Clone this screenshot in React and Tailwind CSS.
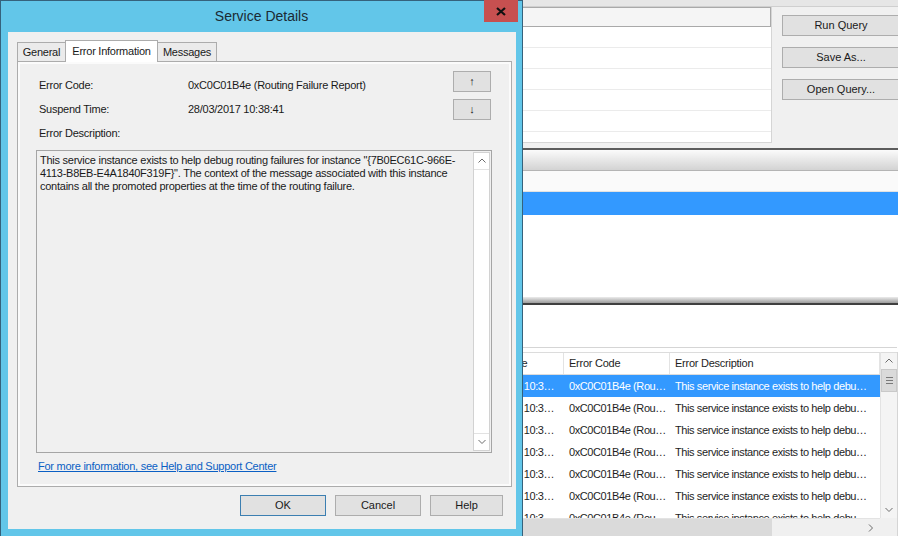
import React from "react";

const columns = [
  { key: "name", label: "Service Name", w: "w-[285px]" },
  { key: "status", label: "Status", w: "w-[170px]" },
  { key: "time", label: "Suspend Time", w: "w-[109px]" },
  { key: "code", label: "Error Code", w: "w-[106px]" },
  { key: "desc", label: "Error Description", w: "w-[210px]" },
];

const row = {
  name: "Microsoft.BizTalk.DefaultPipelines.XMLReceive",
  status: "Suspended (resumable)",
  time: "28/03/2017 10:38:41",
  code: "0xC0C01B4e (Routing Failure Report)",
  desc: "This service instance exists to help debug routing failures for instance",
};

const rows = Array.from({ length: 7 }, (_, i) => ({ ...row, id: i }));

function Chevron({ dir = "up" }) {
  const d = {
    up: "M0.5 4.5L4 1L7.5 4.5",
    down: "M0.5 1L4 4.5L7.5 1",
    right: "M1 0.5L4.5 4L1 7.5",
  }[dir];
  const box = dir === "right" ? "0 0 6 8" : "0 0 8 6";
  return (
    <svg width={dir === "right" ? 6 : 8} height={dir === "right" ? 8 : 6} viewBox={box}>
      <path d={d} fill="none" stroke="#6b6b6b" strokeWidth="1" />
    </svg>
  );
}

function WinButton({ children, className = "", primary = false }) {
  return (
    <button
      className={`flex h-[21px] shrink-0 items-center justify-center border bg-[#e1e1e1] text-[11px] tracking-normal text-[#1a1a1a] ${
        primary ? "border-[#3c7fb1]" : "border-[#adadad]"
      } ${className}`}
    >
      {children}
    </button>
  );
}

function AppWindow() {
  return (
    <div className="flex h-full flex-col">
      <div className="h-[7px] border-b border-[#cfcfcf] bg-[#e6e6e6]" />

      {/* query area */}
      <div className="flex h-[141px]">
        <div className="flex h-[136px] w-[772px] shrink-0 flex-col border-r border-b border-[#d5d5d5] bg-white">
          <div className="h-[20px] border border-[#a9a9a9] bg-[#f5f5f5]" />
          {[0, 1, 2, 3, 4].map((i) => (
            <div key={i} className="h-[21px] border-b border-[#ebebeb]" />
          ))}
        </div>
        <div className="flex shrink-0 flex-col gap-[11px] pl-[10px] pt-[8px]">
          <WinButton className="w-[118px]">Run Query</WinButton>
          <WinButton className="w-[118px]">Save As...</WinButton>
          <WinButton className="w-[118px]">Open Query...</WinButton>
        </div>
      </div>

      {/* results */}
      <div className="h-[23px] border-t-2 border-b border-t-[#5c5c5c] border-b-[#b4b4b4] bg-gradient-to-b from-[#fbfbfb] to-[#d3d3d3]" />
      <div className="h-[21px] border-b border-[#e2e2e2] bg-[#fafafa]" />
      <div className="h-[23px] bg-[#3399ff]" />
      <div className="h-[82px] bg-white" />
      <div className="h-[8px] border-b-2 border-[#3f3f3f] bg-gradient-to-b from-[#ececec] to-[#9c9c9c]" />
      <div className="h-[47px] bg-white pr-[1px]">
        <div className="h-[43px] border-b border-[#d5d5d5]" />
      </div>

      {/* message grid */}
      <div className="flex h-[184px] border-r border-[#d5d5d5] bg-white tracking-[-0.4px]">
        <div className="flex w-[880px] shrink-0 flex-col">
          <div className="flex h-[23px] border-t border-b border-[#dcdcdc] tracking-[-0.25px]">
            {columns.map((c) => (
              <div
                key={c.key}
                className={`${c.w} flex shrink-0 items-center border-r border-[#e3e3e3] pl-[5px] text-[#1e1e1e]`}
              >
                {c.label}
              </div>
            ))}
          </div>
          <div className="h-[143px] overflow-hidden">
            {rows.map((r) => {
              const sel = r.id === 0;
              return (
                <div
                  key={r.id}
                  className={`flex h-[22px] items-center ${sel ? "bg-[#3399ff] text-white" : "text-[#1e1e1e]"}`}
                >
                  <div className="w-[285px] shrink-0 truncate pl-[5px]">{r.name}</div>
                  <div className="w-[170px] shrink-0 truncate pl-[5px]">{r.status}</div>
                  <div className="w-[109px] shrink-0 truncate pl-[15px] pr-[5px]">{r.time}</div>
                  <div className="w-[106px] shrink-0 truncate pl-[5px] pr-[3px]">{r.code}</div>
                  <div className="w-[210px] shrink-0 truncate pl-[5px] pr-[11px]">{r.desc}</div>
                </div>
              );
            })}
          </div>
          <div className="flex h-[18px] border-t border-[#e3e3e3] bg-[#f0f0f0]">
            <div className="w-[772px] shrink-0 bg-[#dadada]" />
            <div className="flex-1" />
            <div className="flex w-[18px] items-center justify-center">
              <Chevron dir="right" />
            </div>
          </div>
        </div>
        <div className="flex w-[17px] shrink-0 flex-col">
          <div className="flex h-[166px] flex-col border-l border-[#e3e3e3] bg-[#f4f4f4]">
            <div className="flex h-[17px] items-center justify-center border-t border-[#dcdcdc]">
              <Chevron dir="up" />
            </div>
            <div className="flex h-[23px] flex-col items-center justify-center gap-[2px] border border-[#c9c9c9] bg-[#dadada]">
              <div className="h-px w-[7px] bg-[#7a7a7a]" />
              <div className="h-px w-[7px] bg-[#7a7a7a]" />
              <div className="h-px w-[7px] bg-[#7a7a7a]" />
            </div>
            <div className="flex-1" />
            <div className="flex h-[17px] items-center justify-center">
              <Chevron dir="down" />
            </div>
          </div>
          <div className="h-[18px] bg-[#f0f0f0]" />
        </div>
      </div>
    </div>
  );
}

function Tab({ children, active, className = "" }) {
  return (
    <div
      className={`flex items-center justify-center border border-b-0 border-[#acacac] ${
        active ? "relative z-10 -mb-px h-[22px] bg-white" : "h-[19px] bg-[#ebebeb]"
      } ${className}`}
    >
      {children}
    </div>
  );
}

function ServiceDetailsDialog() {
  return (
    <div className="absolute left-0 top-0 flex h-[545px] w-[523px] flex-col border border-[#35627c] bg-[#62c6e9]">
      <div className="relative flex h-[31px] items-center justify-center">
        <span className="text-[14px] tracking-normal text-[#1b2a33]">Service Details</span>
        <div className="absolute right-[4px] top-[-1px] flex h-[22px] w-[34px] items-center justify-center bg-[#c75050]">
          <svg width="10" height="9" viewBox="0 0 10 9">
            <path d="M1 1L9 8M9 1L1 8" stroke="#111" strokeWidth="2.2" />
          </svg>
        </div>
      </div>

      <div className="ml-[7px] mr-[6px] flex h-[497px] flex-col bg-[#f0f0f0]">
        {/* tabs */}
        <div className="ml-[9px] mt-[8px] flex h-[21px] items-end">
          <Tab className="w-[49px]">General</Tab>
          <Tab active className="-ml-px w-[93px]">Error Information</Tab>
          <Tab className="-ml-px w-[60px]">Messages</Tab>
        </div>

        <div className="ml-[9px] mr-[4px] flex h-[426px] flex-col border border-[#acacac] bg-[#f0f0f0] shadow-[inset_0_0_0_2px_#fbfbfb]">
          <div className="flex items-start justify-between pl-[21px] pr-[20px] pt-[9px]">
            <div className="mt-[2px] grid grid-cols-[149px_1fr] auto-rows-[24px] items-center">
              <span>Error Code:</span>
              <span>0xC0C01B4e (Routing Failure Report)</span>
              <span>Suspend Time:</span>
              <span>28/03/2017 10:38:41</span>
              <span>Error Description:</span>
              <span />
            </div>
            <div className="flex flex-col gap-[7px]">
              <WinButton className="w-[38px] text-[10px]">↑</WinButton>
              <WinButton className="w-[38px] text-[10px]">↓</WinButton>
            </div>
          </div>

          <div className="ml-[18px] mt-[5px] flex h-[303px] w-[456px] border border-[#a5a5a5] bg-[#f0f0f0] p-px">
            <div className="flex-1 whitespace-nowrap pl-[2px] pt-[2px] leading-[13px]">
              This service instance exists to help debug routing failures for instance "{"{"}7B0EC61C-966E-
              <br />
              4113-B8EB-E4A1840F319F{"}"}". The context of the message associated with this instance
              <br />
              contains all the promoted properties at the time of the routing failure.
            </div>
            <div className="flex w-[17px] flex-col border border-[#d2d2d2] bg-white">
              <div className="flex h-[17px] items-center justify-center border-b border-[#e2e2e2]">
                <Chevron dir="up" />
              </div>
              <div className="flex-1" />
              <div className="flex h-[17px] items-center justify-center border-t border-[#e2e2e2]">
                <Chevron dir="down" />
              </div>
            </div>
          </div>

          <div className="ml-[20px] mt-[7px] leading-[13px]">
            <span className="text-[#0a5fc4] underline">For more information, see Help and Support Center</span>
          </div>
        </div>

        <div className="mr-[13px] mt-[8px] flex justify-end gap-[9px]">
          <WinButton primary className="w-[86px]">OK</WinButton>
          <WinButton className="w-[86px]">Cancel</WinButton>
          <WinButton className="w-[73px]">Help</WinButton>
        </div>
      </div>
    </div>
  );
}

export default function App() {
  return (
    <div className="relative h-[536px] w-[898px] overflow-hidden bg-[#f0f0f0] font-['Liberation_Sans',Arial,sans-serif] text-[11px] tracking-[-0.25px] text-[#1a1a1a]">
      <AppWindow />
      <ServiceDetailsDialog />
    </div>
  );
}
